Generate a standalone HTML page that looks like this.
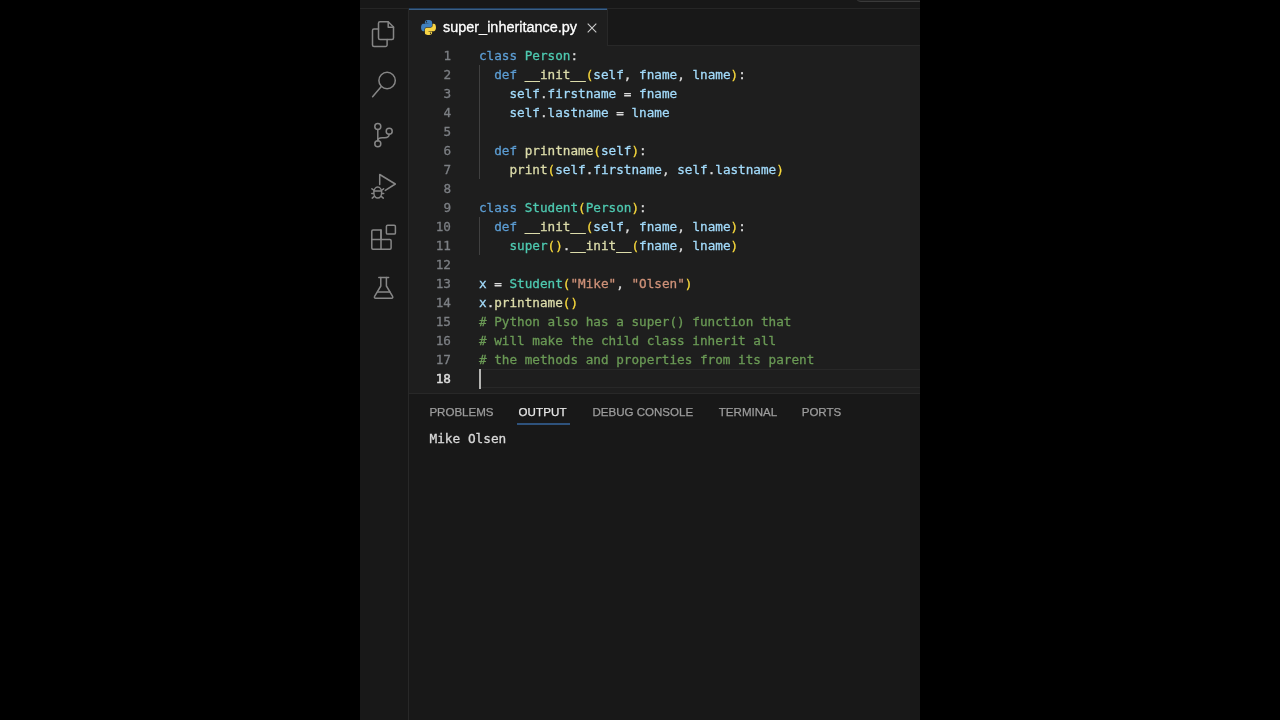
<!DOCTYPE html>
<html><head><meta charset="utf-8"><title>super_inheritance.py</title>
<style>
html,body{margin:0;padding:0;background:#000;}
body{width:1280px;height:720px;overflow:hidden;position:relative;font-family:"Liberation Sans",sans-serif;}
#win{will-change:transform;position:absolute;left:360px;top:0;width:560px;height:720px;background:#181818;overflow:hidden;}
#title{position:absolute;left:0;top:0;width:560px;height:8px;background:#181818;border-bottom:1px solid #262626;}
#tabtop{z-index:5;position:absolute;left:48.5px;top:8px;width:198.5px;height:2px;background:linear-gradient(#1f3d5e 0,#1f3d5e 50%,#3b5f85 50%,#3b5f85 100%);}
#cmd{position:absolute;left:495px;top:-21px;width:80px;height:21px;border:1px solid #3a3a3a;border-radius:6px;background:#222;}
#act{position:absolute;left:0;top:9px;width:48px;height:711px;background:#181818;border-right:1px solid #282828;}
#act svg{position:absolute;left:0;display:block;}
#tabs{position:absolute;left:49px;top:9px;width:511px;height:36px;background:#181818;border-bottom:1px solid #282828;}
#tab{position:absolute;left:0;top:0;width:198.5px;height:37px;background:#1e1e1e;border-right:1px solid #282828;box-sizing:border-box;}
#tab .lbl{-webkit-text-stroke:0.3px;position:absolute;left:34px;top:9px;font-size:14.45px;line-height:18px;color:#fff;white-space:nowrap;}
#tab svg{position:absolute;}
#ed{position:absolute;left:49px;top:46px;width:511px;height:347px;background:#1e1e1e;}
.ln,.cl{-webkit-text-stroke:0.3px;position:absolute;font-family:"DejaVu Sans Mono","Liberation Mono",monospace;font-size:12.66px;line-height:19px;height:19px;white-space:pre;}
.ln{left:0;width:42px;text-align:right;color:#7c7f84;}
.cl{left:70px;color:#dcdcdc;}
.k{color:#5c9dd3}.t{color:#4ec9b0}.f{color:#dcdcaa}.v{color:#a2dafa}.s{color:#ce9178}.c{color:#6a9955}.b{color:#f7d83c}
.g{position:absolute;width:1px;background:#404040;left:70px;}
#cur{position:absolute;left:70px;top:323.25px;width:446px;height:19px;box-sizing:border-box;border:1px solid #282828;}
#caret{position:absolute;left:70px;top:323.2px;width:2px;height:19.5px;background:#b4b4b2;}
#panel{position:absolute;left:49px;top:393px;width:511px;height:327px;background:#181818;border-top:1px solid #282828;}
.pt{-webkit-text-stroke:0.25px;position:absolute;top:11.4px;font-size:11.55px;line-height:14px;color:#9d9d9d;white-space:nowrap;}
#out{-webkit-text-stroke:0.3px;position:absolute;left:20.5px;top:34.5px;font-family:"DejaVu Sans Mono","Liberation Mono",monospace;font-size:12.75px;line-height:19px;color:#d8d8d8;white-space:pre;}
</style></head><body>
<div id="win">
<div id="title"><div id="cmd"></div></div>
<div id="tabtop"></div>
<div id="act"><svg width="48" height="711" viewBox="360 9 48 711" fill="none" stroke="#868686" stroke-width="1.5" stroke-linejoin="round" stroke-linecap="round">
<path d="M380 21.7h8.200l5.300 5.300v11.100a1.5 1.5 0 0 1-1.5 1.5h-12a1.5 1.5 0 0 1-1.5-1.5v-14.9a1.5 1.5 0 0 1 1.5-1.5z"/>
<path d="M388.200 21.900v5.300h5.300"/>
<path d="M378.5 28.9h-4.5a1.5 1.5 0 0 0-1.5 1.5v14.6a1.5 1.5 0 0 0 1.5 1.5h11.6a1.5 1.5 0 0 0 1.5-1.5v-5.4"/>
<circle cx="387.1" cy="80.5" r="8.2"/>
<path d="M381.3 86.5L372.6 96.7"/>
<circle cx="377.8" cy="126.4" r="3"/>
<circle cx="389.2" cy="131.3" r="3"/>
<circle cx="377.8" cy="143.7" r="3"/>
<path d="M377.8 129.4v11.3"/>
<path d="M389.2 134.3c0 2.6-1.8 3.4-4.4 3.4h-2.6c-2.6 0-4.4 1-4.4 3"/>
<path d="M379.7 184.6v-10.100l15.600 9.500-10 6.400"/>
<ellipse cx="377.75" cy="192.6" rx="3.9" ry="5.5"/>
<path d="M373.900 190.900h7.700M373.600 190l-1.700-1.200M381.900 190l1.700-1.200M373.300 193.400h-1.500M382.200 193.400h1.500M374 196.600l-1.800 1.500M381.500 196.600l1.800 1.500"/>
<rect x="386.4" y="225.3" width="9" height="8.8" rx="1.2"/>
<path d="M381 230.1h-8a1.2 1.2 0 0 0-1.2 1.2v16.8a1.2 1.2 0 0 0 1.2 1.2h16.9a1.2 1.2 0 0 0 1.2-1.2v-7.4a1.2 1.2 0 0 0-1.2-1.2h-8.9z"/>
<path d="M381 230.1v19.2M371.8 239.5h9.2"/>
<path d="M378.8 277.6h9.8"/>
<path d="M380.8 277.6v8.4l-6.2 10.4a1.2 1.2 0 0 0 1 1.9h16a1.2 1.2 0 0 0 1-1.9l-6.2-10.4v-8.4"/>
<path d="M377.6 292h12.2"/>
</svg></div>
<div id="tabs"><div id="tab"><svg style="left:11.6px;top:10.9px" width="15" height="15.200" viewBox="0 0 111 113"><path fill="#4080bd" d="M54.9 0C50.3 0 46 .4 42.100 1.100 30.800 3.100 28.700 7.300 28.700 15v10.250h26.800v3.400H18.600c-7.800 0-14.600 4.700-16.700 13.600-2.500 10.200-2.600 16.600 0 27.250 1.900 7.900 6.450 13.600 14.250 13.600h9.200V70.850c0-8.850 7.650-16.650 16.750-16.650h26.800c7.450 0 13.400-6.150 13.400-13.650V15c0-7.250-6.100-12.700-13.400-13.900C64.300.3 59.500 0 54.900 0zM40.400 8.200c2.800 0 5.050 2.300 5.050 5.150 0 2.800-2.250 5.100-5.050 5.100s-5.050-2.300-5.050-5.100c0-2.850 2.250-5.150 5.050-5.150z"/><path fill="#f7d445" d="M85.650 28.650v11.900c0 9.250-7.850 17-16.750 17H42.100c-7.350 0-13.400 6.300-13.400 13.650V96.700c0 7.250 6.300 11.550 13.400 13.650 8.500 2.500 16.650 2.950 26.800 0 6.750-1.950 13.400-5.900 13.400-13.650V86.500H55.500v-3.400h40.200c7.800 0 10.700-5.450 13.400-13.600 2.800-8.400 2.700-16.500 0-27.250-1.900-7.750-5.600-13.600-13.400-13.600H85.650zM70.600 93.300c2.750 0 5 2.300 5 5.100 0 2.850-2.250 5.150-5 5.150-2.800 0-5.050-2.300-5.050-5.150 0-2.800 2.250-5.100 5.050-5.100z"/></svg><span class="lbl">super_inheritance.py</span><svg style="left:178px;top:14.2px" width="10" height="10" viewBox="0 0 10 10"><path d="M.7.7l8.600 8.600M9.300.7L.7 9.300" stroke="#cccccc" stroke-width="1.100" fill="none"/></svg></div></div>
<div id="ed">
<div class="ln" style="top:0px">1</div><div class="cl" style="top:0px"><span class="k">class</span> <span class="t">Person</span>:</div>
<div class="ln" style="top:19px">2</div><div class="cl" style="top:19px">  <span class="k">def</span> <span class="f">__init__</span><span class="b">(</span><span class="v">self</span>, <span class="v">fname</span>, <span class="v">lname</span><span class="b">)</span>:</div>
<div class="ln" style="top:38px">3</div><div class="cl" style="top:38px">    <span class="v">self</span>.<span class="v">firstname</span> = <span class="v">fname</span></div>
<div class="ln" style="top:57px">4</div><div class="cl" style="top:57px">    <span class="v">self</span>.<span class="v">lastname</span> = <span class="v">lname</span></div>
<div class="ln" style="top:76px">5</div><div class="cl" style="top:76px"></div>
<div class="ln" style="top:95px">6</div><div class="cl" style="top:95px">  <span class="k">def</span> <span class="f">printname</span><span class="b">(</span><span class="v">self</span><span class="b">)</span>:</div>
<div class="ln" style="top:114px">7</div><div class="cl" style="top:114px">    <span class="f">print</span><span class="b">(</span><span class="v">self</span>.<span class="v">firstname</span>, <span class="v">self</span>.<span class="v">lastname</span><span class="b">)</span></div>
<div class="ln" style="top:133px">8</div><div class="cl" style="top:133px"></div>
<div class="ln" style="top:152px">9</div><div class="cl" style="top:152px"><span class="k">class</span> <span class="t">Student</span><span class="b">(</span><span class="t">Person</span><span class="b">)</span>:</div>
<div class="ln" style="top:171px">10</div><div class="cl" style="top:171px">  <span class="k">def</span> <span class="f">__init__</span><span class="b">(</span><span class="v">self</span>, <span class="v">fname</span>, <span class="v">lname</span><span class="b">)</span>:</div>
<div class="ln" style="top:190px">11</div><div class="cl" style="top:190px">    <span class="t">super</span><span class="b">()</span>.<span class="f">__init__</span><span class="b">(</span><span class="v">fname</span>, <span class="v">lname</span><span class="b">)</span></div>
<div class="ln" style="top:209px">12</div><div class="cl" style="top:209px"></div>
<div class="ln" style="top:228px">13</div><div class="cl" style="top:228px"><span class="v">x</span> = <span class="t">Student</span><span class="b">(</span><span class="s">"Mike"</span>, <span class="s">"Olsen"</span><span class="b">)</span></div>
<div class="ln" style="top:247px">14</div><div class="cl" style="top:247px"><span class="v">x</span>.<span class="f">printname</span><span class="b">()</span></div>
<div class="ln" style="top:266px">15</div><div class="cl" style="top:266px"><span class="c"># Python also has a super() function that</span></div>
<div class="ln" style="top:285px">16</div><div class="cl" style="top:285px"><span class="c"># will make the child class inherit all</span></div>
<div class="ln" style="top:304px">17</div><div class="cl" style="top:304px"><span class="c"># the methods and properties from its parent</span></div>
<div class="ln" style="top:323px;color:#dedede;-webkit-text-stroke:0.45px">18</div><div class="cl" style="top:323px"></div>
<div class="g" style="top:19px;height:114px"></div>
<div class="g" style="top:171px;height:38px"></div>
<div id="cur"></div><div id="caret"></div>
</div>
<div id="panel">
<span class="pt" style="left:20.4px">PROBLEMS</span>
<span class="pt" style="left:109.5px;color:#e7e7e7;letter-spacing:0.1px">OUTPUT</span>
<span class="pt" style="left:183.4px">DEBUG CONSOLE</span>
<span class="pt" style="left:309.8px">TERMINAL</span>
<span class="pt" style="left:392.7px">PORTS</span>
<div style="position:absolute;left:107.6px;top:29.3px;width:53.4px;height:1.4px;background:#2e527c"></div>
<div id="out">Mike Olsen</div>
</div>
</div>
</body></html>
